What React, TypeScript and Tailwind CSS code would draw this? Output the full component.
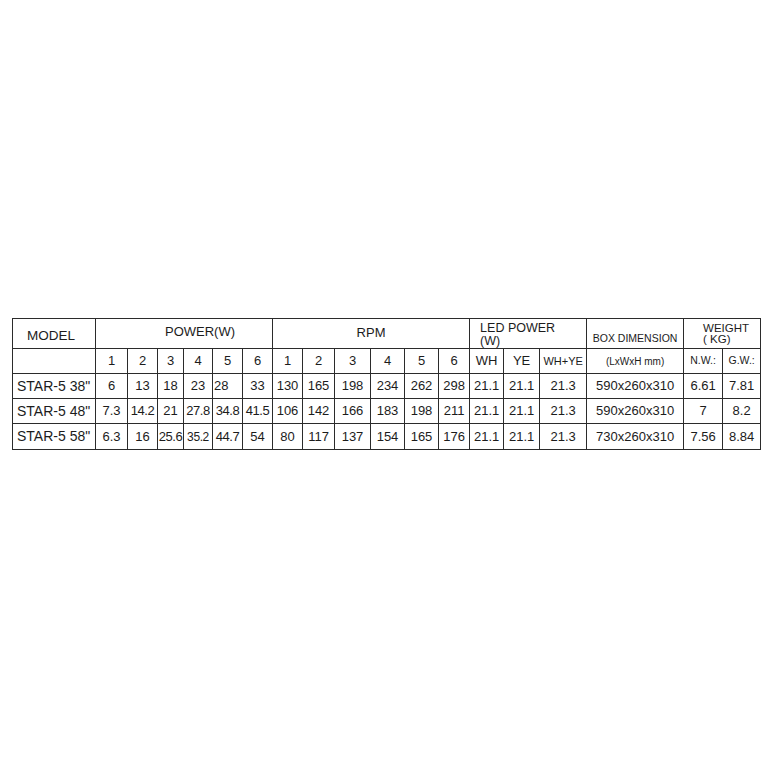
const power = ["1", "2", "3", "4", "5", "6"];

type Row = {
  model: string;
  power: string[];
  rpm: string[];
  led: string[];
  box: string;
  nw: string;
  gw: string;
};

const rows: Row[] = [
  {
    model: 'STAR-5 38"',
    power: ["6", "13", "18", "23", "28", "33"],
    rpm: ["130", "165", "198", "234", "262", "298"],
    led: ["21.1", "21.1", "21.3"],
    box: "590x260x310",
    nw: "6.61",
    gw: "7.81",
  },
  {
    model: 'STAR-5 48"',
    power: ["7.3", "14.2", "21", "27.8", "34.8", "41.5"],
    rpm: ["106", "142", "166", "183", "198", "211"],
    led: ["21.1", "21.1", "21.3"],
    box: "590x260x310",
    nw: "7",
    gw: "8.2",
  },
  {
    model: 'STAR-5 58"',
    power: ["6.3", "16", "25.6", "35.2", "44.7", "54"],
    rpm: ["80", "117", "137", "154", "165", "176"],
    led: ["21.1", "21.1", "21.3"],
    box: "730x260x310",
    nw: "7.56",
    gw: "8.84",
  },
];

// column widths measured off the sheet
const widths = [83, 32, 30, 26, 29, 30, 30, 30, 32, 36, 34, 34, 31, 34, 36, 47, 97, 39, 38];

const cell = "border border-[#2b2b2b] p-0 text-center align-middle";

export default function App() {
  return (
    <div
      className="flex h-[768px] w-[768px] items-center bg-white pl-[12px] text-[#1c1c1c]"
      style={{ fontFamily: '"Liberation Sans", Arial, sans-serif' }}
    >
      <table className="w-[749px] table-fixed border-collapse">
        <colgroup>
          {widths.map((w, i) => (
            <col key={i} style={{ width: w }} />
          ))}
        </colgroup>
        <tbody>
          {/* header row 1 */}
          <tr className="h-[30px]">
            <td className={`${cell} text-[13.5px] leading-none`}>
              <span className="relative top-[2px] -left-[3px]">MODEL</span>
            </td>
            <td colSpan={6} className={`${cell} pl-[32px] text-[13px] leading-none`}>
              <span className="relative -top-[2px]">POWER(W)</span>
            </td>
            <td colSpan={6} className={`${cell} text-[13px] leading-none`}>
              <span className="relative -top-[1px]">RPM</span>
            </td>
            <td colSpan={3} className={`${cell} pl-[10px] text-left align-top text-[12.5px] leading-[13px]`}>
              <div className="pt-[3px]">
                LED POWER
                <br />
                (W)
              </div>
            </td>
            <td className={`${cell} text-[10.5px] leading-none`}>
              <span className="relative top-[5px]">BOX DIMENSION</span>
            </td>
            <td colSpan={2} className={`${cell} pl-[19px] text-left align-top text-[11.5px] leading-[11px]`}>
              <div className="pt-[4px]">
                WEIGHT
                <br />( KG)
              </div>
            </td>
          </tr>

          {/* header row 2 */}
          <tr className="h-[25px] text-[13px]">
            <td className={cell}></td>
            {power.map((p) => (
              <td key={"p" + p} className={cell}>
                {p}
              </td>
            ))}
            {power.map((p) => (
              <td key={"r" + p} className={cell}>
                {p}
              </td>
            ))}
            <td className={cell}>WH</td>
            <td className={cell}>YE</td>
            <td className={`${cell} text-[11px]`}>WH+YE</td>
            <td className={`${cell} text-[10px]`}>(LxWxH mm)</td>
            <td className={`${cell} text-[10.5px]`}>N.W.:</td>
            <td className={`${cell} text-[10.5px]`}>G.W.:</td>
          </tr>

          {/* data */}
          {rows.map((r, ri) => (
            <tr key={r.model} className={`${ri === 2 ? "h-[26px]" : "h-[25px]"} text-[13px]`}>
              <td className={`${cell} pl-[4px] text-left text-[14px]`}>{r.model}</td>
              {r.power.map((v, i) => (
                <td
                  key={i}
                  className={`${cell} ${ri === 0 && i === 4 ? "pl-[1px] text-left" : ""} ${
                    v.length > 3 ? "tracking-[-0.4px]" : ""
                  } ${ri === 2 && i === 3 ? "text-[12px]" : ""}`}
                >
                  {v}
                </td>
              ))}
              {r.rpm.map((v, i) => (
                <td key={i} className={cell}>
                  {v}
                </td>
              ))}
              {r.led.map((v, i) => (
                <td key={i} className={cell}>
                  {v}
                </td>
              ))}
              <td className={cell}>{r.box}</td>
              <td className={cell}>{r.nw}</td>
              <td className={cell}>{r.gw}</td>
            </tr>
          ))}
        </tbody>
      </table>
    </div>
  );
}
